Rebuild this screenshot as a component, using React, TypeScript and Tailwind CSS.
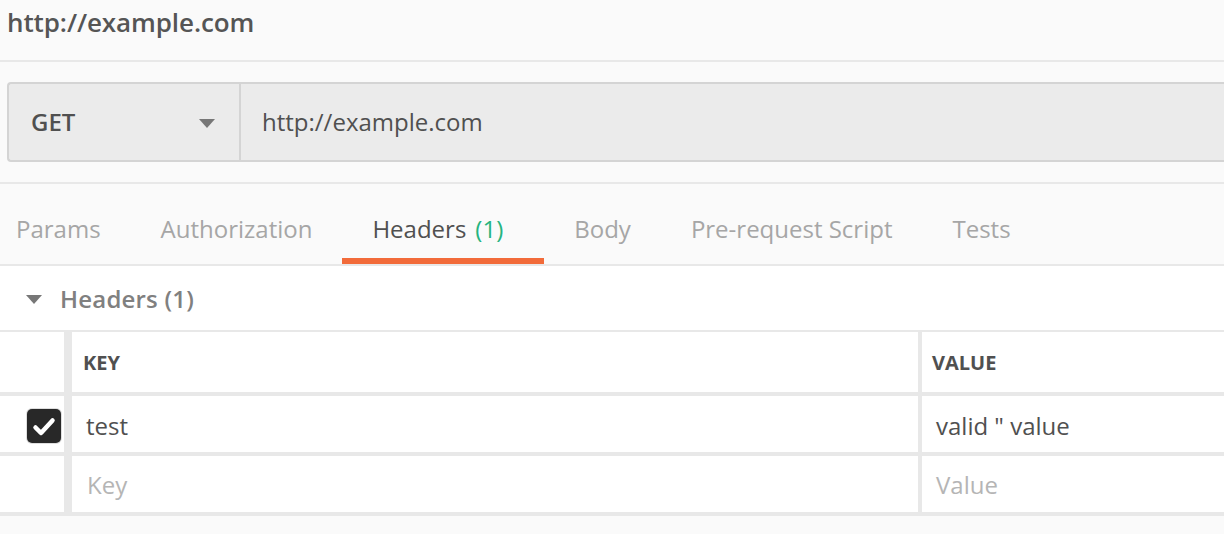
const tabs = [
  { label: 'Params' },
  { label: 'Authorization' },
  { label: 'Headers', count: 1, active: true },
  { label: 'Body' },
  { label: 'Pre-request Script' },
  { label: 'Tests' },
];

function Caret({ className = '' }: { className?: string }) {
  return (
    <svg className={className} width="16" height="9" viewBox="0 0 16 9">
      <path d="M0 0h16L8 9z" fill="#777" />
    </svg>
  );
}

function Checkbox() {
  return (
    <div className="w-[34px] h-[34px] rounded-[5px] bg-[#282828] ring-1 ring-[#dedede] flex items-center justify-center">
      <svg width="28" height="28" viewBox="0 0 28 28">
        <path d="M5.5 15.5l5.5 5.5L22.5 8.5" fill="none" stroke="#fff" strokeWidth={4.5} strokeLinecap="round" strokeLinejoin="round" />
      </svg>
    </div>
  );
}

export default function App() {
  return (
    <div className="w-[1224px] h-[534px] overflow-hidden bg-[#fafafa] font-['Open_Sans',sans-serif] text-[#505050]">
      {/* Request title */}
      <div className="h-[62px] border-b-2 border-[#e8e8e8] px-[7px] pt-[9px]">
        <div className="text-[26px] leading-[26px] font-semibold tracking-[-0.1px] text-[#555]">http://example.com</div>
      </div>

      {/* Method + URL bar */}
      <div className="h-[122px] border-b-2 border-[#e8e8e8] pt-[20px] pl-[7px]">
        <div className="flex h-[80px] rounded-l-[4px] border-y-2 border-l-2 border-[#d4d4d4] bg-[#ebebeb]">
          <div className="w-[232px] shrink-0 flex items-center justify-between pl-[22px] pr-[24px] border-r-2 border-[#d4d4d4]">
            <span className="text-[24px] font-semibold">GET</span>
            <Caret className="mt-[2px]" />
          </div>
          <div className="flex items-center pl-[21px] text-[24px]">http://example.com</div>
        </div>
      </div>

      {/* Tabs */}
      <div className="h-[82px] border-b-2 border-[#e8e8e8] flex items-stretch">
        {tabs.map((t, i) => (
          <div
            key={t.label}
            className={`flex items-center text-[24px] pt-[16px] border-b-[6px] ${i === 0 ? 'pl-[16px] pr-[30px]' : 'px-[30px]'} ${
              t.active ? 'pr-[41px] text-[#505050] border-[#f26b3a]' : 'text-[#a6a6a6] border-transparent'
            }`}
          >
            {t.label}
            {t.count != null && <span className="ml-[9px] text-[#26b47f]">({t.count})</span>}
          </div>
        ))}
      </div>

      {/* Headers section */}
      <div className="bg-white">
        <div className="h-[66px] border-b-2 border-[#e8e8e8] flex items-center pl-[26px] gap-[18px]">
          <Caret className="mt-[2px]" />
          <span className="text-[24px] font-semibold text-[#808080] mt-[2px] tracking-[0.2px]">Headers (1)</span>
        </div>

        <div className="grid grid-cols-[64px_8px_846px_4px_1fr]">
          {/* header row */}
          <div className="h-[60px]" />
          <div className="bg-[#e8e8e8]" />
          <div className="flex items-center pl-[11px] pt-[2px] text-[20px] font-bold">KEY</div>
          <div className="bg-[#e8e8e8]" />
          <div className="flex items-center pl-[10px] pt-[2px] text-[20px] font-bold">VALUE</div>
          <div className="col-span-5 h-[4px] bg-[#e8e8e8]" />

          {/* row 1 */}
          <div className="h-[56px] flex items-center pl-[27px] pt-[4px]">
            <Checkbox />
          </div>
          <div className="bg-[#e8e8e8]" />
          <div className="flex items-center pl-[14px] pt-[4px] text-[24px]">test</div>
          <div className="bg-[#e8e8e8]" />
          <div className="flex items-center pl-[14px] pt-[4px] text-[24px]">valid " value</div>
          <div className="col-span-5 h-[4px] bg-[#e8e8e8]" />

          {/* empty row */}
          <div className="h-[56px]" />
          <div className="bg-[#e8e8e8]" />
          <div className="flex items-center pl-[15px] pt-[2px] text-[24px] text-[#b5b5b5]">Key</div>
          <div className="bg-[#e8e8e8]" />
          <div className="flex items-center pl-[14px] pt-[2px] text-[24px] text-[#b5b5b5]">Value</div>
          <div className="col-span-5 h-[4px] bg-[#e8e8e8]" />
        </div>
      </div>
    </div>
  );
}
